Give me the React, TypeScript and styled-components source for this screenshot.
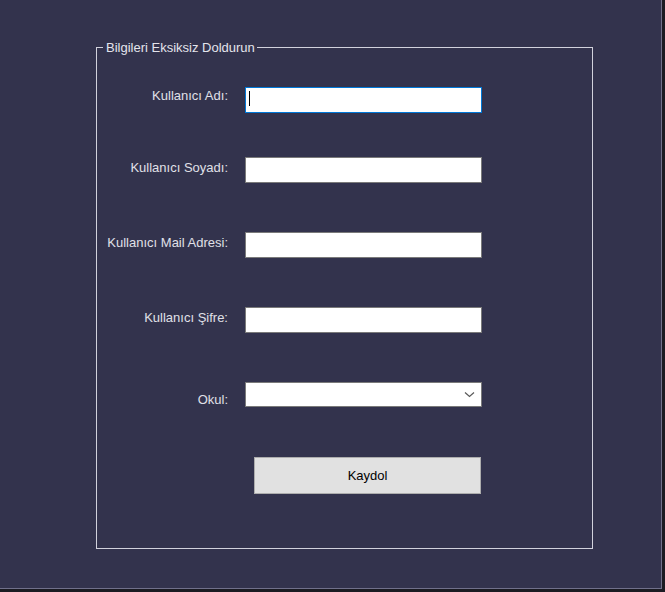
import React from "react";
import styled, { createGlobalStyle } from "styled-components";

const GlobalStyle = createGlobalStyle`
  html, body {
    margin: 0;
    padding: 0;
    background: #1b1b22;
  }
  body {
    font-family: "Liberation Sans", Arial, sans-serif;
  }
`;

const Window = styled.div`
  width: 665px;
  height: 592px;
  background: #1b1b22;
`;

const Client = styled.div`
  box-sizing: border-box;
  width: 662px;
  height: 589px;
  padding: 47px 0 0 96px;
  background: #33334d;
  border-right: 1px solid #70708a;
  border-bottom: 1px solid #70708a;
`;

const GroupBox = styled.section`
  position: relative;
  box-sizing: border-box;
  width: 497px;
  height: 502px;
  padding-top: 39px;
  border: 1px solid #d2d2dc;
  display: flex;
  flex-direction: column;
`;

const Legend = styled.span`
  position: absolute;
  top: -8px;
  left: 6px;
  padding: 0 2px 0 3px;
  background: #33334d;
  color: #e4e4ec;
  font-size: 13px;
  line-height: 15px;
`;

const Row = styled.div<{ $top: number }>`
  display: grid;
  grid-template-columns: 131px 237px;
  column-gap: 17px;
  margin-top: ${(p) => p.$top}px;
`;

const Label = styled.label<{ $offset: number }>`
  margin-top: ${(p) => p.$offset}px;
  text-align: right;
  color: #e0e0e8;
  font-size: 13px;
  line-height: 15px;
  white-space: nowrap;
`;

const TextBox = styled.div<{ $focused?: boolean }>`
  box-sizing: border-box;
  height: 26px;
  padding: 3px 0 0 3px;
  background: #ffffff;
  border: 1px solid ${(p) => (p.$focused ? "#0078d7" : "#7a7a7a")};
`;

const Caret = styled.span`
  display: block;
  width: 1px;
  height: 15px;
  background: #000000;
`;

const ComboBox = styled.div`
  box-sizing: border-box;
  height: 25px;
  padding-right: 6px;
  display: flex;
  align-items: center;
  justify-content: flex-end;
  background: #ffffff;
  border: 1px solid #7a7a7a;
`;

const Button = styled.button`
  box-sizing: border-box;
  width: 227px;
  height: 37px;
  margin: 50px 0 0 157px;
  padding: 0;
  background: #e1e1e1;
  border: 1px solid #adadad;
  color: #000000;
  font-family: "Liberation Sans", Arial, sans-serif;
  font-size: 13px;
`;

const fields = [
  { label: "Kullanıcı Adı:", top: 0, offset: 1, focused: true },
  { label: "Kullanıcı Soyadı:", top: 44, offset: 3 },
  { label: "Kullanıcı Mail Adresi:", top: 49, offset: 3 },
  { label: "Kullanıcı Şifre:", top: 49, offset: 3 },
];

function Chevron() {
  return (
    <svg width="11" height="7" viewBox="0 0 11 7">
      <path d="M1 1.5 L5.5 5.5 L10 1.5" fill="none" stroke="#5a5a5a" strokeWidth="1.2" />
    </svg>
  );
}

export default function App() {
  return (
    <Window>
      <GlobalStyle />
      <Client>
        <GroupBox>
          <Legend>Bilgileri Eksiksiz Doldurun</Legend>

          {fields.map((f) => (
            <Row key={f.label} $top={f.top}>
              <Label $offset={f.offset}>{f.label}</Label>
              <TextBox $focused={f.focused}>{f.focused && <Caret />}</TextBox>
            </Row>
          ))}

          <Row $top={49}>
            <Label $offset={10}>Okul:</Label>
            <ComboBox>
              <Chevron />
            </ComboBox>
          </Row>

          <Button>Kaydol</Button>
        </GroupBox>
      </Client>
    </Window>
  );
}
